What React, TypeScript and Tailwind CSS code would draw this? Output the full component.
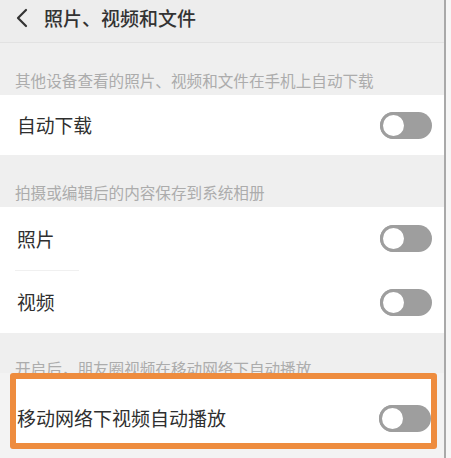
const font = { fontFamily: '"Noto Sans CJK SC", "Noto Sans", sans-serif' };

const Toggle = () => (
  <div className="relative h-[27px] w-[52px] rounded-full bg-[#9e9e9e]">
    <div className="absolute left-0 top-0 h-[27px] w-[27px] rounded-full border-[3px] border-[#9e9e9e] bg-white" />
  </div>
);

const Caption = ({ text }: { text: string }) => (
  <div className="flex h-[52px] items-end bg-[#efefef] px-[15px] pb-[5px]">
    <span className="text-[15.6px] leading-[20px] text-[#acacac]">{text}</span>
  </div>
);

const Row = ({ label, h }: { label: string; h: string }) => (
  <div className={`flex items-center justify-between bg-white pl-[17px] pr-[12px] ${h}`}>
    <span className="text-[18.8px] leading-[24px] text-[#2f2f2f]">{label}</span>
    <Toggle />
  </div>
);

export default function App() {
  return (
    <div className="flex h-[458px] w-[451px] overflow-hidden bg-[#f4f4f4]" style={font}>
      <div className="flex w-[444px] flex-col bg-[#efefef]">
        {/* header */}
        <div className="flex h-[43px] items-center gap-[16px] border-b border-[#e2e2e2] bg-[#ededed] pb-[6px] pl-[15px]">
          <svg width="13" height="20" viewBox="0 0 13 20" fill="none">
            <polyline points="11,2 3,10 11,18" stroke="#333" strokeWidth="2.2" strokeLinecap="round" strokeLinejoin="round" />
          </svg>
          <span className="text-[19px] font-medium leading-[24px] text-[#333]">照片、视频和文件</span>
        </div>

        <Caption text="其他设备查看的照片、视频和文件在手机上自动下载" />
        <Row label="自动下载" h="h-[60px]" />

        <Caption text="拍摄或编辑后的内容保存到系统相册" />
        <Row label="照片" h="h-[63px]" />
        <div className="flex h-px bg-white">
          <div className="ml-[15px] w-[64px] bg-[#f0f0f0]" />
        </div>
        <Row label="视频" h="h-[62px]" />

        <div className="h-[40px] bg-[#efefef] px-[15px] pt-[25px]">
          <span className="block text-[15.6px] leading-[20px] text-[#acacac]">开启后，朋友圈视频在移动网络下自动播放</span>
        </div>
        <div className="flex-1 bg-[#f3f3f3] px-[10px]">
          <div className="relative flex h-[76px] w-[427px] items-center justify-between rounded-[3px] border-[6px] border-[#ee8c3e] bg-white pl-[1px] pr-0 pt-[14px]">
            <span className="text-[19px] leading-[24px] text-[#2f2f2f]">移动网络下视频自动播放</span>
            <Toggle />
          </div>
        </div>
      </div>
      <div className="w-[2px] bg-[#a9a9a9]" />
      <div className="flex-1 bg-[#f6f6f6]" />
    </div>
  );
}
